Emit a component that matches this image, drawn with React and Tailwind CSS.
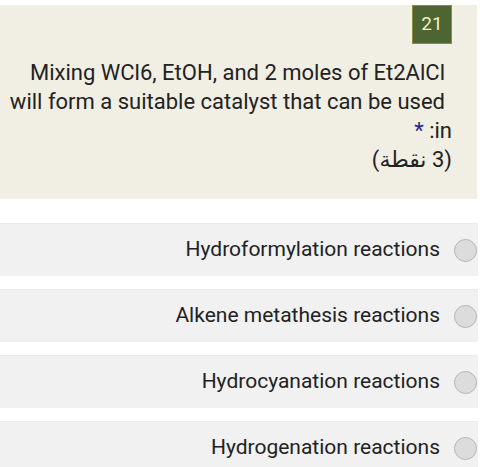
import React from "react";

const options = [
  "Hydroformylation reactions",
  "Alkene metathesis reactions",
  "Hydrocyanation reactions",
  "Hydrogenation reactions",
];

const App = () => {
  return (
    <div className="w-[482px] h-[467px] overflow-hidden bg-white pt-[5px] font-['Roboto',sans-serif] text-[#222]">
      {/* Question card */}
      <div className="w-[477px] h-[194px] bg-[#f1eee3] flex flex-col items-end">
        <div className="mr-[25px] w-[40px] h-[39px] bg-[#4c6533] border border-[#8d8c3c] flex items-center justify-center text-[#f3f0c0] text-[19px]">
          21
        </div>
        <div className="mt-[14px] pr-[32px] flex flex-col items-end text-[22px] leading-[29px] whitespace-nowrap">
          <div>Mixing WCl6, EtOH, and 2 moles of Et2AlCl</div>
          <div>will form a suitable catalyst that can be used</div>
          <div className="-mr-[7px]">
            <span className="text-[#1b2a8c]">*</span> :in
          </div>
          {/* points label is an RTL line */}
          <div dir="rtl" className="-mr-[7px] font-['Roboto','DejaVu_Sans',sans-serif]">
            {"(3 \u0646\u0642\u0637\u0629)"}
          </div>
        </div>
      </div>

      {/* Options */}
      <div className="mt-[24px] flex flex-col gap-[13px]">
        {options.map((opt) => (
          <div
            key={opt}
            className="w-[478px] h-[53px] bg-[#f1f1f1] border-t border-[#ebebeb] flex items-center justify-end"
          >
            <span className="text-[21px] mr-[14px]">{opt}</span>
            <span className="w-[23px] h-[23px] rounded-full bg-[#dcdcdc] border border-[#b5b5b5] mr-[1px]" />
          </div>
        ))}
      </div>
    </div>
  );
};

export default App;
